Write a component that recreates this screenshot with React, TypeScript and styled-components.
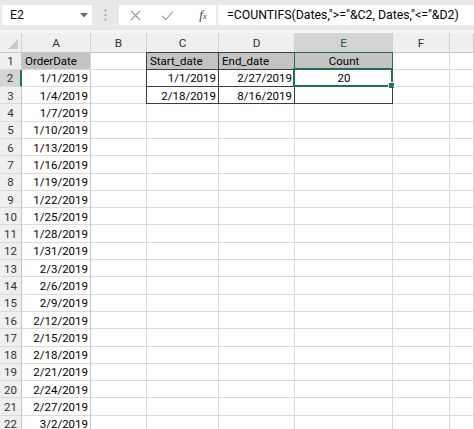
import React from "react";
import styled, { createGlobalStyle, css } from "styled-components";

const GlobalStyle = createGlobalStyle`
  html, body { margin: 0; padding: 0; background: #ffffff; }
  body { overflow: hidden; }
`;

const GRID_FONT = `"Roboto", "Lato", "Liberation Sans", sans-serif`;
const UI_FONT = `"Roboto", "Noto Sans", "Liberation Sans", sans-serif`;
const GREEN = "#217346";
const DARK = "#3c3c3c";
const GRIDLINE = "#dadada";

const Page = styled.div`
  width: 474px;
  height: 429px;
  overflow: hidden;
  display: flex;
  flex-direction: column;
  background: #f5f5f5;
`;

const FormulaBar = styled.div`
  height: 30px;
  flex: none;
  display: flex;
  align-items: center;
  padding-left: 2px;
  background: #e8e8e8;
  box-sizing: border-box;
`;

const NameBox = styled.div`
  width: 90px;
  height: 20px;
  background: #fff;
  display: flex;
  align-items: center;
  justify-content: space-between;
  padding: 0 4px 0 8px;
  box-sizing: border-box;
  font-family: ${UI_FONT};
  font-size: 12.3px;
  color: #111;
`;

const Grip = styled.div`
  width: 27px;
  display: flex;
  justify-content: center;
  align-items: center;
`;

const ButtonBox = styled.div`
  width: 97px;
  height: 20px;
  background: #fff;
  display: grid;
  grid-template-columns: 32px 33px 32px;
  align-items: center;
  justify-items: center;
`;

const FxLabel = styled.span`
  font-family: "Liberation Serif", "DejaVu Serif", serif;
  font-style: italic;
  font-size: 13px;
  color: #444;
  padding-left: 6px;
  & small { font-size: 9px; }
`;

const FormulaInput = styled.div`
  flex: 1;
  height: 20px;
  margin-left: 2px;
  background: #fff;
  display: flex;
  align-items: center;
  padding-left: 9px;
  font-family: ${UI_FONT};
  font-size: 12.3px;
  color: #000;
  white-space: nowrap;
  overflow: hidden;
`;

const SheetArea = styled.div`
  flex: 1;
  padding-top: 3px;
  overflow: hidden;
`;

const Grid = styled.div`
  display: grid;
  grid-template-columns: 22px 69px 56px 72px 76px 98px 57px 1fr;
  grid-template-rows: 19.5px;
  grid-auto-rows: 17.3px;
  background: #fff;
  font-family: ${GRID_FONT};
`;

const ColHeader = styled.div<{ $active?: boolean }>`
  box-sizing: border-box;
  background: ${(p) => (p.$active ? "#d4d4d4" : "#efefef")};
  border-right: 1px solid #d0d0d0;
  border-bottom: 1px solid #c6c6c6;
  display: flex;
  align-items: center;
  justify-content: center;
  padding-top: 2px;
  font-size: 11.8px;
  color: ${(p) => (p.$active ? "#2f5e43" : "#333")};
  position: relative;
`;

const Corner = styled(ColHeader)`
  background: #efefef;
`;

const CornerTriangle = styled.div`
  position: absolute;
  right: 3px;
  bottom: 3px;
  width: 0;
  height: 0;
  border-left: 10px solid transparent;
  border-bottom: 10px solid #c9c9c9;
`;

const RowHeader = styled.div<{ $active?: boolean }>`
  box-sizing: border-box;
  background: ${(p) => (p.$active ? "#d4d4d4" : "#efefef")};
  border-right: ${(p) => (p.$active ? `2px solid ${GREEN}` : "1px solid #c6c6c6")};
  border-bottom: 1px solid #dadada;
  display: flex;
  align-items: center;
  justify-content: center;
  padding-top: 1px;
  font-size: 11.5px;
  color: #333;
`;

type Align = "left" | "right" | "center";

const Cell = styled.div<{
  $align?: Align;
  $fill?: boolean;
  $boxed?: boolean;
  $leftEdge?: boolean;
  $topEdge?: boolean;
  $accent?: boolean;
  $blueRight?: boolean;
}>`
  box-sizing: border-box;
  position: relative;
  min-width: 0;
  display: flex;
  align-items: center;
  padding: 1px 2px 0 3px;
  white-space: nowrap;
  overflow: visible;
  font-size: 11.5px;
  color: #000;
  border-right: 1px solid ${GRIDLINE};
  border-bottom: 1px solid ${GRIDLINE};
  justify-content: ${(p) =>
    p.$align === "right" ? "flex-end" : p.$align === "center" ? "center" : "flex-start"};
  background: ${(p) => (p.$fill ? "#c3c3c3" : "transparent")};
  ${(p) =>
    p.$blueRight &&
    css`
      border-right-color: #b4cde8;
    `}
  ${(p) =>
    p.$boxed &&
    css`
      border-right-color: ${DARK};
      border-bottom-color: ${DARK};
    `}
  ${(p) =>
    p.$leftEdge &&
    css`
      margin-left: -1px;
      border-left: 1px solid ${p.$accent ? GREEN : DARK};
    `}
  ${(p) =>
    p.$topEdge &&
    css`
      margin-top: -1px;
      border-top: 1px solid ${p.$accent ? GREEN : DARK};
    `}
  ${(p) =>
    p.$accent &&
    css`
      border-right-color: ${GREEN};
    `}
`;

const Selection = styled.div`
  position: absolute;
  left: -2px;
  top: -2px;
  right: -1px;
  bottom: -1px;
  border: 2px solid ${GREEN};
  pointer-events: none;
`;

const FillHandle = styled.div`
  position: absolute;
  right: -4px;
  bottom: -4px;
  width: 5px;
  height: 5px;
  background: ${GREEN};
  border: 1px solid #fff;
`;

const dates = [
  "1/1/2019", "1/4/2019", "1/7/2019", "1/10/2019", "1/13/2019", "1/16/2019",
  "1/19/2019", "1/22/2019", "1/25/2019", "1/28/2019", "1/31/2019", "2/3/2019",
  "2/6/2019", "2/9/2019", "2/12/2019", "2/15/2019", "2/18/2019", "2/21/2019",
  "2/24/2019", "2/27/2019", "3/2/2019",
];

const columns = ["A", "B", "C", "D", "E", "F", ""];

type CellSpec = {
  text?: string;
  align?: Align;
  fill?: boolean;
  boxed?: boolean;
  leftEdge?: boolean;
  topEdge?: boolean;
  accent?: boolean;
  selected?: boolean;
  blueRight?: boolean;
};

function buildRow(r: number): CellSpec[] {
  const cells: CellSpec[] = columns.map(() => ({}));
  if (r === 1) cells[0] = { text: "OrderDate", fill: true };
  else cells[0] = { text: dates[r - 2], align: "right", blueRight: true };

  if (r >= 1 && r <= 3) {
    const top = r === 1;
    cells[2] = { boxed: true, leftEdge: true, topEdge: top };
    cells[3] = { boxed: true, topEdge: top };
    cells[4] = { boxed: true, topEdge: top, align: "center" };
  }
  if (r === 1) {
    cells[2] = { ...cells[2], text: "Start_date", fill: true };
    cells[3] = { ...cells[3], text: "End_date", fill: true };
    cells[4] = { ...cells[4], text: "Count", fill: true, accent: true, leftEdge: true };
  }
  if (r === 2) {
    cells[2] = { ...cells[2], text: "1/1/2019", align: "right" };
    cells[3] = { ...cells[3], text: "2/27/2019", align: "right" };
    cells[4] = { ...cells[4], text: "20", selected: true };
  }
  if (r === 3) {
    cells[2] = { ...cells[2], text: "2/18/2019", align: "right" };
    cells[3] = { ...cells[3], text: "8/16/2019", align: "right" };
  }
  return cells;
}

const XIcon = () => (
  <svg width="11" height="11" viewBox="0 0 11 11">
    <path d="M1 1 L10 10 M10 1 L1 10" stroke="#9a9a9a" strokeWidth="1.1" fill="none" />
  </svg>
);

const CheckIcon = () => (
  <svg width="13" height="11" viewBox="0 0 13 11">
    <path d="M1 6 L4.8 9.6 L12 1.5" stroke="#9a9a9a" strokeWidth="1.1" fill="none" />
  </svg>
);

const DropArrow = () => (
  <svg width="8" height="5" viewBox="0 0 8 5">
    <path d="M0 0 L8 0 L4 4.5 Z" fill="#6a6a6a" />
  </svg>
);

const GripDots = () => (
  <svg width="3" height="12" viewBox="0 0 3 12">
    <rect x="0.5" y="0.5" width="2" height="2" fill="#a8a8a8" />
    <rect x="0.5" y="5" width="2" height="2" fill="#a8a8a8" />
    <rect x="0.5" y="9.5" width="2" height="2" fill="#a8a8a8" />
  </svg>
);

export default function App() {
  const rows = Array.from({ length: 22 }, (_, i) => i + 1);
  return (
    <Page>
      <GlobalStyle />
      <FormulaBar>
        <NameBox>
          <span>E2</span>
          <DropArrow />
        </NameBox>
        <Grip>
          <GripDots />
        </Grip>
        <ButtonBox>
          <XIcon />
          <CheckIcon />
          <FxLabel>
            f<small>x</small>
          </FxLabel>
        </ButtonBox>
        <FormulaInput>=COUNTIFS(Dates,"&gt;="&amp;C2, Dates,"&lt;="&amp;D2)</FormulaInput>
      </FormulaBar>
      <SheetArea>
        <Grid>
          <Corner>
            <CornerTriangle />
          </Corner>
          {columns.map((c, i) => (
            <ColHeader key={`h${i}`} $active={c === "E"}>
              {c}
            </ColHeader>
          ))}
          {rows.map((r) => (
            <React.Fragment key={r}>
              <RowHeader $active={r === 2}>{r}</RowHeader>
              {buildRow(r).map((cell, ci) => (
                <Cell
                  key={ci}
                  $align={cell.align}
                  $fill={cell.fill}
                  $boxed={cell.boxed}
                  $leftEdge={cell.leftEdge}
                  $topEdge={cell.topEdge}
                  $accent={cell.accent}
                  $blueRight={cell.blueRight}
                >
                  {cell.text}
                  {cell.selected && (
                    <Selection>
                      <FillHandle />
                    </Selection>
                  )}
                </Cell>
              ))}
            </React.Fragment>
          ))}
        </Grid>
      </SheetArea>
    </Page>
  );
}
